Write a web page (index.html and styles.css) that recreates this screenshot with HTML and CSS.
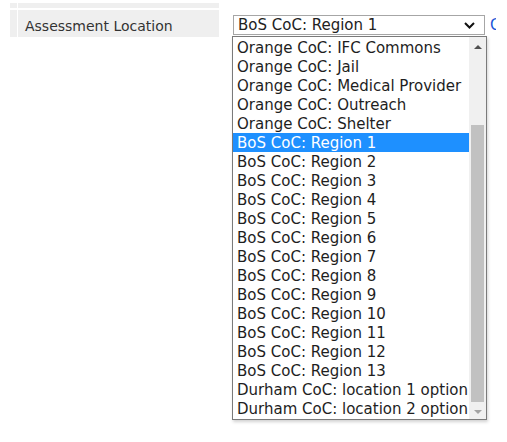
FILE: index.html
```html
<!DOCTYPE html>
<html>
<head>
<meta charset="utf-8">
<link rel="stylesheet" href="styles.css">
</head>
<body>
<div class="page">
  <div class="form-grid">
    <div class="cell stub"></div>
    <div class="cell head"></div>
    <div class="blank"></div>
    <div class="cell stub"></div>
    <div class="cell label">Assessment Location</div>
    <div class="field">
      <div class="select">
        <span class="select-value">BoS CoC: Region 1</span>
        <svg class="chev" width="11" height="7" viewBox="0 0 11 7"><polyline points="1,1 5.5,5.5 10,1" fill="none" stroke="#111" stroke-width="2"/></svg>
      </div>
      <span class="link"><span class="link-text">C</span></span>
    </div>
  </div>

  <div class="dropdown">
    <ul class="options">
      <li>Orange CoC: IFC Commons</li>
      <li>Orange CoC: Jail</li>
      <li>Orange CoC: Medical Provider</li>
      <li>Orange CoC: Outreach</li>
      <li>Orange CoC: Shelter</li>
      <li class="selected">BoS CoC: Region 1</li>
      <li>BoS CoC: Region 2</li>
      <li>BoS CoC: Region 3</li>
      <li>BoS CoC: Region 4</li>
      <li>BoS CoC: Region 5</li>
      <li>BoS CoC: Region 6</li>
      <li>BoS CoC: Region 7</li>
      <li>BoS CoC: Region 8</li>
      <li>BoS CoC: Region 9</li>
      <li>BoS CoC: Region 10</li>
      <li>BoS CoC: Region 11</li>
      <li>BoS CoC: Region 12</li>
      <li>BoS CoC: Region 13</li>
      <li>Durham CoC: location 1 option</li>
      <li>Durham CoC: location 2 option</li>
    </ul>
    <div class="scrollbar">
      <div class="arrow up"></div>
      <div class="track"><div class="thumb"></div></div>
      <div class="arrow down"></div>
    </div>
  </div>
</div>
</body>
</html>
```

FILE: styles.css
```css
html, body {
  margin: 0;
  padding: 0;
  background: #ffffff;
}

.page {
  position: relative;
  width: 507px;
  height: 442px;
  overflow: hidden;
  font-family: "DejaVu Sans", Verdana, sans-serif;
}

.form-grid {
  display: grid;
  grid-template-columns: 7px 201px auto;
  grid-template-rows: 5px 27px;
  column-gap: 1px;
  row-gap: 2px;
  margin: 3px 0 0 10px;
}

.cell {
  background: #efefef;
}

.label {
  font-size: 14px;
  color: #333333;
  padding: 2px 0 0 7px;
  line-height: 29px;
  box-sizing: border-box;
  overflow: hidden;
}

.field {
  display: flex;
  align-items: center;
  gap: 5px;
  padding-left: 13px;
  padding-top: 2px;
}

.select {
  box-sizing: border-box;
  width: 252px;
  height: 20px;
  border: 1px solid #a6a6a6;
  display: flex;
  align-items: center;
  justify-content: space-between;
  padding: 2px 9px 0 4px;
  font-size: 15px;
  line-height: 17px;
  color: #222222;
  background: #ffffff;
}

.chev {
  display: block;
  margin-top: 0;
}

.link {
  display: block;
  width: 6px;
  overflow: hidden;
  font-size: 15px;
  line-height: 17px;
  padding-top: 2px;
  color: #1a55d8;
}

.dropdown {
  position: absolute;
  left: 232px;
  top: 36px;
  width: 255px;
  height: 384px;
  box-sizing: border-box;
  border: 1px solid #7a7a7a;
  background: #ffffff;
  display: flex;
  box-shadow: 1px 2px 3px rgba(0, 0, 0, 0.18);
}

.options {
  list-style: none;
  margin: 0;
  padding: 1px 0 0 0;
  flex: 1;
  font-size: 15px;
  color: #1e1e1e;
}

.options li {
  height: 19px;
  box-sizing: border-box;
  padding: 2px 0 0 4px;
  line-height: 17px;
  white-space: nowrap;
}

.options li.selected {
  background: #1e90ff;
  color: #ffffff;
}

.scrollbar {
  width: 17px;
  background: #f0f0f0;
  display: flex;
  flex-direction: column;
}

.arrow {
  height: 17px;
  position: relative;
}

.arrow::after {
  content: "";
  position: absolute;
  left: 5px;
  top: 8px;
  border-left: 4px solid transparent;
  border-right: 4px solid transparent;
}

.arrow.up::after {
  border-bottom: 4px solid #505050;
}

.arrow.down::after {
  border-top: 4px solid #a3a3a3;
}

.track {
  flex: 1;
  display: flex;
  flex-direction: column;
  justify-content: flex-end;
  padding: 0 2px;
}

.thumb {
  height: 277px;
  background: #c1c1c1;
}
```
